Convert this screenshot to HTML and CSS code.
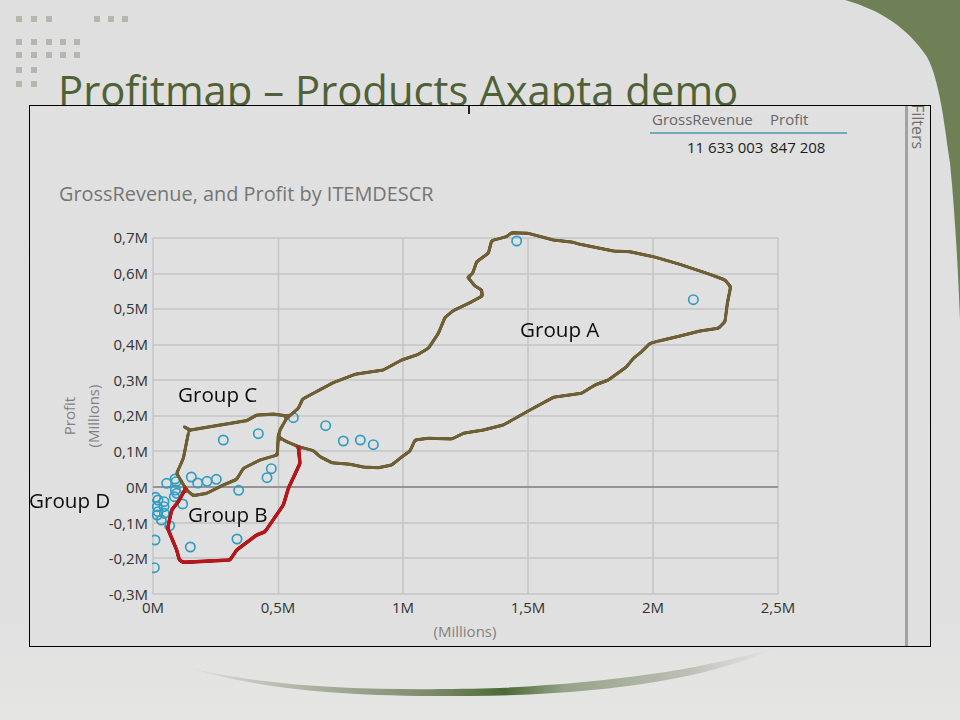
FILE: index.html
```html
<!DOCTYPE html>
<html lang="en">
<head>
<meta charset="utf-8">
<title>Profitmap</title>
<link rel="stylesheet" href="styles.css">
</head>
<body>
<div class="slide">
  <svg class="decor" viewBox="0 0 960 720" width="960" height="720" aria-hidden="true">
    <defs>
      <linearGradient id="swoosh" x1="180" x2="780" y1="0" y2="0" gradientUnits="userSpaceOnUse">
        <stop offset="0" stop-color="#b0b6a6" stop-opacity="0"/>
        <stop offset="0.18" stop-color="#b4baaa"/>
        <stop offset="0.42" stop-color="#7c8a6c"/>
        <stop offset="0.54" stop-color="#4c6a35"/>
        <stop offset="0.64" stop-color="#95a288"/>
        <stop offset="0.85" stop-color="#bcc0b5"/>
        <stop offset="1" stop-color="#d0d2cc" stop-opacity="0"/>
      </linearGradient>
    </defs>
    <path class="corner" d="M845 0C880 10 907 27 927 57C940 80 945 130 950 163C955 213 958 270 960 320V0Z"/>
    <path fill="url(#swoosh)" d="M180 665C280 693 420 690 500 688C620 682 710 668 780 646C720 675 620 695 470 696C340 697 260 690 180 665Z"/>
    <g class="dots">
      <rect x="16" y="16" width="6" height="6"/><rect x="31" y="16" width="6" height="6"/><rect x="46" y="16" width="6" height="6"/>
      <rect x="94" y="16" width="6" height="6"/><rect x="108" y="16" width="6" height="6"/><rect x="122" y="16" width="6" height="6"/>
      <rect x="16" y="39" width="6" height="6"/><rect x="31" y="39" width="6" height="6"/><rect x="46" y="39" width="6" height="6"/><rect x="60" y="39" width="6" height="6"/><rect x="74" y="39" width="6" height="6"/>
      <rect x="16" y="52" width="6" height="6"/><rect x="31" y="52" width="6" height="6"/><rect x="46" y="52" width="6" height="6"/><rect x="60" y="52" width="6" height="6"/><rect x="74" y="52" width="6" height="6"/>
      <rect x="16" y="67" width="6" height="6"/><rect x="31" y="67" width="6" height="6"/>
      <rect x="16" y="81" width="6" height="6"/><rect x="31" y="81" width="6" height="6"/>
    </g>
  </svg>

  <header class="head">
    <h1 class="title">Profitmap – Products Axapta demo</h1>
  </header>

  <section class="frame">
    <span class="tick"></span>
    <div class="main">
      <div class="kpi">
        <div class="kpi-head"><span class="kpi-a">GrossRevenue</span><span class="kpi-b">Profit</span></div>
        <div class="kpi-vals"><span class="kpi-a">11 633 003</span><span class="kpi-b">847 208</span></div>
      </div>
      <h2 class="chart-title">GrossRevenue, and Profit by ITEMDESCR</h2>
      <svg class="chart" viewBox="30 210 875 435" width="875" height="435">
        <defs>
          <clipPath id="plot"><rect x="152" y="225" width="630" height="370"/></clipPath>
          <filter id="soften" x="100" y="200" width="700" height="420" filterUnits="userSpaceOnUse" color-interpolation-filters="sRGB">
            <feGaussianBlur stdDeviation="1"/>
            <feComponentTransfer><feFuncA type="linear" slope="5" intercept="-1.700"/></feComponentTransfer>
          </filter>
        </defs>
        <g class="grid">
          <path d="M153 238H778M153 274H778M153 309H778M153 345H778M153 380H778M153 416H778M153 451H778M153 523H778M153 558H778M153 594H778"/>
          <path d="M153 238V594M278.500 238V594M403 238V594M528 238V594M653 238V594M778 238V594"/>
        </g>
        <path class="zero" d="M153 487H778"/>

        <g class="ylabels">
          <text x="148" y="243">0,7M</text><text x="148" y="279">0,6M</text><text x="148" y="314">0,5M</text>
          <text x="148" y="350">0,4M</text><text x="148" y="386">0,3M</text><text x="148" y="421">0,2M</text>
          <text x="148" y="457">0,1M</text><text x="148" y="493">0M</text><text x="148" y="529">-0,1M</text>
          <text x="148" y="564">-0,2M</text><text x="148" y="600">-0,3M</text>
        </g>
        <g class="xlabels">
          <text x="153" y="613">0M</text><text x="278" y="613">0,5M</text><text x="403" y="613">1M</text>
          <text x="528" y="613">1,5M</text><text x="653" y="613">2M</text><text x="778" y="613">2,5M</text>
        </g>
        <text class="axis-title" x="465" y="637">(Millions)</text>
        <text class="axis-title" transform="translate(75 416) rotate(-90)">Profit</text>
        <text class="axis-title" transform="translate(99 416) rotate(-90)">(Millions)</text>

        <g clip-path="url(#plot)">
          <g transform="translate(20 380) scale(.33333)" class="pts">
            <circle cx="820" cy="113" r="14"/><circle cx="715" cy="161" r="14"/><circle cx="610" cy="180" r="14"/>
            <circle cx="754" cy="266" r="14"/><circle cx="741" cy="293" r="14"/><circle cx="656" cy="331" r="14"/><circle cx="589" cy="298" r="14"/>
            <circle cx="561" cy="304" r="14"/><circle cx="533" cy="309" r="14"/><circle cx="514" cy="291" r="14"/><circle cx="465" cy="297" r="14"/>
            <circle cx="468" cy="305" r="14"/><circle cx="440" cy="310" r="14"/><circle cx="466" cy="330" r="14"/><circle cx="470" cy="340" r="14"/>
            <circle cx="463" cy="350" r="14"/><circle cx="407" cy="352" r="14"/><circle cx="432" cy="365" r="14"/><circle cx="414" cy="360" r="14"/>
            <circle cx="432" cy="380" r="14"/><circle cx="488" cy="372" r="14"/><circle cx="412" cy="380" r="14"/><circle cx="414" cy="395" r="14"/>
            <circle cx="433" cy="400" r="14"/><circle cx="412" cy="405" r="14"/><circle cx="424" cy="420" r="14"/><circle cx="449" cy="437" r="14"/>
            <circle cx="405" cy="480" r="14"/><circle cx="511" cy="501" r="14"/><circle cx="651" cy="477" r="14"/><circle cx="403" cy="563" r="14"/>
          </g>
          <g transform="translate(280 220) scale(.33333)" class="pts">
            <circle cx="710" cy="63" r="14"/><circle cx="1240" cy="239" r="14"/><circle cx="137" cy="617" r="14"/><circle cx="190" cy="663" r="14"/>
            <circle cx="241" cy="660" r="14"/><circle cx="280" cy="674" r="14"/>
          </g>
        </g>

        <g filter="url(#soften)">
          <g transform="translate(280 220) scale(.33333)">
            <polyline class="brown" points="-5,650 20,665 55,680 100,692 120,710 155,728 210,733 250,741 295,743 335,735 360,715 390,693 405,660 445,655 515,657 550,640 610,630 670,615 750,570 820,532 905,520 945,495 985,480 1040,440 1060,415 1085,395 1110,370 1140,362 1200,348 1260,333 1315,325 1335,305 1342,250 1352,200 1335,180 1290,163 1200,133 1120,110 1050,95 1000,93 900,73 880,67 820,60 745,40 695,38 680,50 635,62 625,100 590,125 578,160 563,172 585,198 605,210 607,228 570,248 520,272 495,292 475,340 445,385 415,403 365,420 310,450 225,463 160,488 68,537 55,565 20,595 0,630 -5,650"/>
          </g>
          <g transform="translate(20 380) scale(.33333)">
            <polyline class="brown" points="492,140 510,150 590,137 680,122 710,105 760,102 805,108"/>
            <polyline class="brown" points="775,165 772,225 720,240 670,265 650,298 610,315 560,340 520,347 500,330 470,280 490,235 505,160"/>
            <polyline class="red" points="497,325 475,365 455,390 443,445 470,510 478,540 490,547 630,540 650,510 710,465 735,455 790,375 805,325 840,250 835,200"/>
          </g>
        </g>

        <g class="groups">
          <text x="520" y="337">Group A</text>
          <text x="178" y="402">Group C</text>
          <text x="188" y="522">Group B</text>
          <text x="29" y="508">Group D</text>
        </g>
      </svg>
    </div>
    <aside class="filters"><span class="filters-text">Filters</span></aside>
  </section>
</div>
</body>
</html>
```

FILE: styles.css
```css
* { box-sizing: border-box; }
html, body { margin: 0; padding: 0; }
body { width: 960px; height: 720px; overflow: hidden; font-family: "Open Sans", "Noto Sans", sans-serif; }

.slide { position: relative; width: 960px; height: 720px; background: linear-gradient(#dfdfdf, #e0e0e0 85%, #e5e6e4); overflow: hidden; filter: blur(.35px); }
.decor { position: absolute; left: 0; top: 0; }
.corner { fill: #6f8057; }
.dots rect { fill: #b6b6ae; }

.head { position: relative; height: 105px; overflow: hidden; padding-left: 58px; }
.title { margin: 0; padding-top: 60px; font-size: 41.800px; line-height: 60px; font-weight: 400; color: #4f6136; white-space: nowrap; }

.frame { position: relative; display: flex; width: 902px; height: 542px; margin-left: 29px; border: 1px solid #000; background: #e0e0e0; }
.tick { position: absolute; left: 438px; top: 0; width: 2px; height: 8px; background: #222; }

.main { flex: 1; min-width: 0; }
.kpi { width: 197px; margin-left: 620px; height: 54px; padding-top: 3px; font-size: 15px; }
.kpi-head { display: flex; height: 25px; border-bottom: 2px solid #72a9b8; color: #666; line-height: 20px; }
.kpi-vals { display: flex; color: #1c1c1c; line-height: 26px; }
.kpi-head .kpi-a { width: 120px; padding-left: 2px; }
.kpi-vals .kpi-a { width: 120px; padding-left: 37px; white-space: nowrap; }
.kpi-b { white-space: nowrap; }

.chart-title { margin: 0 0 0 29px; height: 50px; padding-top: 19px; font-size: 19.900px; line-height: 30px; font-weight: 400; color: #757575; white-space: nowrap; }
.chart { display: block; overflow: visible; }

.grid path { fill: none; stroke: #c3c3c3; stroke-width: 1.5; }
.zero { fill: none; stroke: #949494; stroke-width: 2; }
.ylabels text { font-size: 15px; fill: #333; text-anchor: end; }
.xlabels text { font-size: 15px; fill: #333; text-anchor: middle; }
.axis-title { font-size: 15px; fill: #808080; text-anchor: middle; }
.pts circle { fill: none; stroke: #2f9dc2; stroke-width: 5; }
.brown, .red { fill: none; stroke-linejoin: round; stroke-linecap: round; }
.brown { stroke: #6f5f35; stroke-width: 9; }
.red { stroke: #b3181c; stroke-width: 10; }
.groups text { font-size: 20.600px; fill: #0c0c0c; }

.filters { width: 25px; border-left: 3px solid #a2a2a2; overflow: hidden; position: relative; }
.filters-text { display: block; writing-mode: vertical-rl; font-size: 16px; line-height: 20px; color: #6e6e6e; margin-top: -2px; }
```
